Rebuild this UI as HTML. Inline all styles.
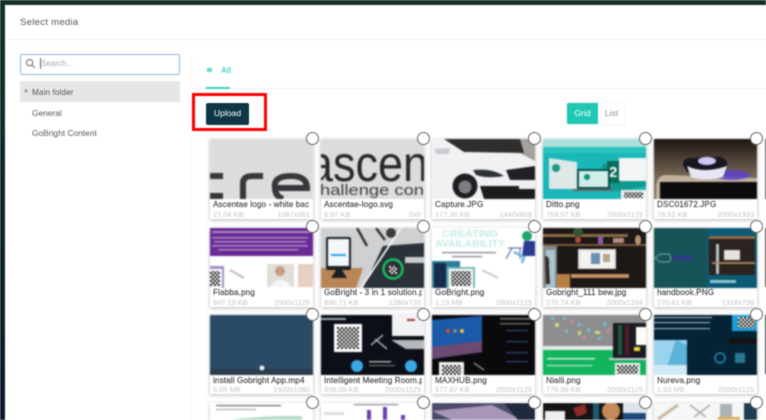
<!DOCTYPE html>
<html><head><meta charset="utf-8"><style>
html,body{margin:0;padding:0;width:766px;height:420px;overflow:hidden;background:#fff}
body{position:relative;font-family:"Liberation Sans",sans-serif;color:#4a4a52}
.a{position:absolute}
#wrap{position:absolute;left:0;top:0;width:766px;height:420px;overflow:hidden;filter:blur(.4px);background:#fff}
.card{position:absolute;width:103px;height:80px;background:#fff;box-shadow:0 1px 4px rgba(0,0,0,.28)}
.card svg{position:absolute;left:0;top:0;width:103px;height:60px;display:block;filter:blur(.45px)}
.r4{height:17px;overflow:hidden}
.card.r4 svg{height:17px}
.n{position:absolute;left:3px;top:60px;width:98px;height:12px;line-height:12px;font-size:8.2px;letter-spacing:.1px;white-space:nowrap;overflow:hidden;color:#46464c;-webkit-text-stroke:.15px #46464c}
.s,.d{position:absolute;top:71px;line-height:9px;font-size:7.4px;color:#c4c4c8}
.s{left:3px}.d{right:3px}
.r2 .n{top:59px}.r2 .s,.r2 .d{top:70px}
.r3 .n{top:60px}.r3 .s,.r3 .d{top:70px}
.c{position:absolute;width:11px;height:11px;border:1.3px solid #666;border-radius:50%;background:#fff}
</style></head><body><div id="wrap">
<div class="a" style="left:0;top:0;width:766px;height:5px;background:#15302a"></div>
<div class="a" style="left:0;top:0;width:5px;height:420px;background:linear-gradient(#15302a,#0b1a2c)"></div>
<div class="a" style="left:8px;top:39px;width:758px;height:1px;background:#f0f0f2"></div>
<div class="a" style="left:20px;top:17px;font-size:9.6px;letter-spacing:.25px;color:#55555f">Select media</div>
<div class="a" style="left:20px;top:54px;width:158px;height:19px;border:1px solid #8db8de;border-radius:2px"></div>
<svg class="a" style="left:25px;top:58px" width="11" height="11" viewBox="0 0 11 11" fill="none" stroke="#777" stroke-width="1.1"><circle cx="4.6" cy="4.6" r="3.2"/><path d="M7 7l3 3"/></svg>
<div class="a" style="left:40px;top:58px;width:1px;height:11px;background:#666"></div>
<div class="a" style="left:41px;top:59px;font-size:8px;color:#a8a8ad">Search...</div>
<div class="a" style="left:20px;top:81px;width:160px;height:21px;background:#e6e6e6"></div>
<div class="a" style="left:25px;top:89px;width:0;height:0;border-left:3px solid #888;border-top:2.5px solid transparent;border-bottom:2.5px solid transparent"></div>
<div class="a" style="left:32px;top:88px;font-size:8.2px;letter-spacing:.1px;color:#555">Main folder</div>
<div class="a" style="left:32px;top:109px;font-size:8.2px;letter-spacing:.1px;color:#555">General</div>
<div class="a" style="left:32px;top:129px;font-size:8.2px;letter-spacing:.1px;color:#555">GoBright Content</div>
<div class="a" style="left:191px;top:55px;width:1px;height:365px;background:#f6f6f7"></div>
<div class="a" style="left:192px;top:88px;width:574px;height:1px;background:#f0f0f2"></div>
<div class="a" style="left:206px;top:87px;width:24px;height:1.5px;background:#3fd0bd"></div>
<div class="a" style="left:207px;top:68px;width:5px;height:4px;background:#62d9c9"></div>
<div class="a" style="left:221px;top:66px;font-size:8px;font-weight:bold;color:#4ed4c2">All</div>
<div class="a" style="left:192px;top:93px;width:69px;height:32px;border:3px solid #ff0000"></div>
<div class="a" style="left:206px;top:103px;width:43px;height:22px;background:#0e3647;border-radius:2px;color:#fff;font-size:8.6px;line-height:21px;text-align:center">Upload</div>
<div class="a" style="left:566px;top:102px;width:60px;height:23px;border:1px solid #f2f2f4;border-radius:2px;box-sizing:border-box"></div>
<div class="a" style="left:567px;top:103px;width:31px;height:21px;background:#1fc8b4;border-radius:2px 0 0 2px;color:#fff;font-size:8.6px;line-height:21px;text-align:center">Grid</div>
<div class="a" style="left:598px;top:103px;width:27px;height:21px;color:#8a8a94;font-size:8.6px;line-height:21px;text-align:center">List</div>

<!-- Row 1 -->
<div class="card" style="left:210px;top:139px"><svg viewBox="0 0 103 60"><defs><pattern id="q" width="4" height="4" patternUnits="userSpaceOnUse"><rect width="4" height="4" fill="#fff"/><rect width="2" height="2" fill="#1a1a1a"/><rect x="2" y="2" width="2" height="2" fill="#1a1a1a"/></pattern></defs><rect width="103" height="60" fill="#dcdcdc"/><g fill="none" stroke="#35373a" stroke-width="6"><path d="M0 37H13M0 57H13"/><path d="M33 60V44Q33 37 43 37H53"/><path d="M97 49H65Q63 37 81 37Q97 37 97 49ZM65 49Q65 57 73 60"/></g></svg><div class="n">Ascentae logo - white bac</div><div class="s">27.04 KB</div><div class="d">1087x261</div></div>
<div class="card" style="left:321px;top:139px"><svg viewBox="0 0 103 60"><rect width="103" height="60" fill="#dcdcdc"/><text x="-13" y="42" font-family="Liberation Sans" font-size="50" textLength="120" lengthAdjust="spacingAndGlyphs" fill="#27292b">ascen</text><text x="-1" y="56" font-family="Liberation Sans" font-size="14.5" textLength="104" lengthAdjust="spacingAndGlyphs" fill="#3a3c3e">hallenge con</text></svg><div class="n">Ascentae-logo.svg</div><div class="s">6.97 KB</div><div class="d">0x0</div></div>
<div class="card" style="left:432px;top:139px"><svg viewBox="0 0 103 60"><rect width="103" height="60" fill="#a5a29e"/><path d="M0 0H14L34 13 0 14Z" fill="#f1f1f3"/><path d="M12 0L32 13 92 14 88 0Z" fill="#2f2e2d"/><path d="M0 13H30L88 14 103 22V60H0Z" fill="#f1f1f3"/><path d="M3 10L18 9 17 15 4 15Z" fill="#c8ccd0"/><path d="M41 31Q60 29 72 37 56 40 44 36Z" fill="#2f3238"/><path d="M74 31L103 27V41H78Z" fill="#202126"/><circle cx="33" cy="47" r="12.5" fill="#1e1e20"/><circle cx="33" cy="48" r="6.5" fill="#7c7e82"/><path d="M48 47H103V60H52Z" fill="#1c1c1f"/><rect x="87" y="44" width="16" height="6" fill="#eee"/></svg><div class="n">Capture.JPG</div><div class="s">177.36 KB</div><div class="d">1440x809</div></div>
<div class="card" style="left:543px;top:139px"><svg viewBox="0 0 103 60"><rect width="103" height="60" fill="#1ab7b9"/><rect width="103" height="8" fill="#a8e0dc"/><path d="M0 8H103V14H0Z" fill="#2cc4c0"/><path d="M6 19L34 23V50L6 50Z" fill="#dde8e7"/><circle cx="13" cy="29" r="4" fill="#1b9a80"/><path d="M59 25H103V47L80 52 60 52Z" fill="#109a8f"/><rect x="64" y="22" width="13" height="22" fill="#0b6a5a"/><text x="66" y="38" font-family="Liberation Sans" font-size="15" font-weight="bold" fill="#fff">2</text><rect x="76" y="19" width="27" height="23" fill="#f4f6f5"/><rect x="34" y="30" width="33" height="20" fill="#0b4f4d"/><rect x="36" y="32" width="29" height="16" fill="#cfeeea"/><circle cx="44" cy="38" r="3" fill="#12907a"/><rect x="30" y="50" width="40" height="2" fill="#666"/><rect x="78" y="51" width="25" height="9" fill="#f3f3f3"/><rect x="81" y="53" width="19" height="6" fill="url(#q)"/></svg><div class="n">Ditto.png</div><div class="s">759.07 KB</div><div class="d">2000x1125</div></div>
<div class="card" style="left:654px;top:139px"><svg viewBox="0 0 103 60"><defs><linearGradient id="g1" x1="0" x2="0" y1="0" y2="1"><stop offset="0" stop-color="#1d1512"/><stop offset=".65" stop-color="#7b6a58"/></linearGradient></defs><rect width="103" height="60" fill="url(#g1)"/><path d="M2 48Q3 36 12 36L103 39V44H8L6 60H2Z" fill="#c0b29c"/><rect x="6" y="43" width="97" height="17" fill="#0c0a0c"/><ellipse cx="78" cy="36" rx="18" ry="5" fill="#5a3ed0" opacity=".8"/><path d="M29 26Q29 19 37 19L66 18Q74 20 73 26L70 33H33Z" fill="#17171e"/><path d="M33 27Q50 35 73 27L69 38Q50 43 37 38Z" fill="#e8e6f4"/><ellipse cx="53" cy="22" rx="9" ry="4" fill="#cfc8fa"/></svg><div class="n">DSC01672.JPG</div><div class="s">78.52 KB</div><div class="d">2000x1333</div></div>
<!-- Row 2 -->
<div class="card r2" style="left:210px;top:228px;height:79px"><svg viewBox="0 0 103 60"><rect width="103" height="60" fill="#fff"/><rect width="103" height="28" fill="#6b2a96"/><g fill="#a98bc2"><rect x="2" y="3" width="99" height="2"/><rect x="2" y="9" width="96" height="1.5"/><rect x="4" y="13" width="92" height="1.5"/><rect x="2" y="17" width="96" height="1.5"/><rect x="8" y="21" width="80" height="1.5"/></g><rect x="0" y="38" width="14" height="22" fill="#a58ccb"/><rect x="0" y="41" width="12" height="19" fill="#fff"/><rect x="0" y="43" width="10" height="15" fill="url(#q)"/><path d="M20 42L34 50" stroke="#bbb" stroke-width="2"/><rect x="57" y="36" width="27" height="23" fill="#e2ddd6"/><circle cx="70" cy="43" r="5" fill="#c69e84"/><path d="M60 59Q70 44 82 59Z" fill="#f3f7f8"/><rect x="88" y="36" width="15" height="23" fill="#e6cfc3"/></svg><div class="n">Flabba.png</div><div class="s">607.19 KB</div><div class="d">2000x1125</div></div>
<div class="card r2" style="left:321px;top:228px;height:79px"><svg viewBox="0 0 103 60"><rect width="103" height="60" fill="#cfd0d1"/><path d="M0 40H42L35 60H0Z" fill="#b98556"/><path d="M103 15L62 18 42 60H103Z" fill="#2b3138"/><path d="M80 0L40 60" stroke="#f4f4f4" stroke-width="1.8"/><path d="M36 0L46 18" stroke="#333" stroke-width="2.5"/><path d="M55 0L64 12" stroke="#333" stroke-width="2.5"/><circle cx="70" cy="5" r="5" fill="#3c3b3b"/><rect x="5" y="9" width="25" height="33" rx="2" fill="#1c1f22"/><rect x="7" y="11" width="21" height="27" fill="#f2f7fb"/><rect x="10" y="26" width="15" height="2" fill="#2fa0e8"/><path d="M15 42H21L26 50H10Z" fill="#1c1f22"/><circle cx="72" cy="41" r="9.5" fill="none" stroke="#16c060" stroke-width="2.5"/><rect x="68" y="38" width="8" height="8" fill="url(#q)"/><rect x="84" y="29" width="19" height="6" fill="#c6ccd0"/></svg><div class="n">GoBright - 3 in 1 solution.pr</div><div class="s">890.71 KB</div><div class="d">1280x720</div></div>
<div class="card r2" style="left:432px;top:228px;height:79px"><svg viewBox="0 0 103 60"><rect width="103" height="60" fill="#fff"/><text x="10" y="9" font-family="Liberation Sans" font-weight="bold" font-size="10" textLength="56" lengthAdjust="spacingAndGlyphs" fill="#c4ebe5">CREATING</text><text x="3" y="19" font-family="Liberation Sans" font-weight="bold" font-size="10" textLength="70" lengthAdjust="spacingAndGlyphs" fill="#c4ebe5">AVAILABILITY</text><rect x="10" y="24" width="54" height="1.2" fill="#77808c"/><rect x="20" y="28" width="30" height="1.2" fill="#77808c"/><path d="M76 20H90M80 20L74 31M88 20V31" stroke="#4858a8" stroke-width="1" fill="none"/><circle cx="95" cy="8" r="5" fill="#1fa56e"/><path d="M92 13H103V28H90Z" fill="#2b3b92"/><path d="M82 24L92 29 90 35" stroke="#6fb4dc" stroke-width="2.5" fill="none"/><rect x="0" y="33" width="28" height="27" fill="#2a7d9c"/><rect x="2" y="35" width="12" height="25" fill="#1a2a4c"/><rect x="15" y="39" width="28" height="21" fill="#6fb7bb"/><rect x="17" y="41" width="24" height="19" fill="#fff"/><rect x="19" y="43" width="20" height="15" fill="url(#q)"/><path d="M50 42L66 50" stroke="#ccc" stroke-width="2"/></svg><div class="n">GoBright.png</div><div class="s">1.13 MB</div><div class="d">2000x1125</div></div>
<div class="card r2" style="left:543px;top:228px;height:79px"><svg viewBox="0 0 103 60"><rect width="103" height="60" fill="#1d1716"/><rect y="6" width="85" height="3" fill="#8b6a45"/><rect y="16" width="103" height="2" fill="#7a5b3c"/><rect x="0" y="18" width="14" height="42" fill="#7e8b8a"/><rect x="3" y="22" width="9" height="38" fill="#a9c5cd"/><path d="M2 28Q7 28 6 37L7 56H3Z" fill="#3a2a28"/><rect x="14" y="46" width="13" height="14" fill="#b57f46"/><rect x="28" y="46" width="58" height="4" fill="#c49460"/><rect x="35" y="21" width="38" height="20" fill="#ddd"/><rect x="37" y="23" width="34" height="17" fill="#f4f3ef"/><rect x="48" y="25" width="9" height="11" fill="#6d8fb0"/><rect x="60" y="26" width="7" height="8" fill="#b8a48a"/><circle cx="35" cy="4" r="5" fill="#36552f"/><circle cx="35" cy="12" r="3" fill="#b94a38"/><rect x="55" y="8" width="5" height="8" fill="#8a5ba8"/><rect x="70" y="10" width="11" height="5" fill="#b19080"/><ellipse cx="95" cy="12" rx="3" ry="5" fill="#b8946c"/></svg><div class="n">Gobright_111 bew.jpg</div><div class="s">270.74 KB</div><div class="d">2000x1334</div></div>
<div class="card r2" style="left:654px;top:228px;height:79px"><svg viewBox="0 0 103 60"><rect width="103" height="60" fill="#17545a"/><rect x="53" width="50" height="60" fill="#0d5a76"/><rect x="55" y="8" width="46" height="39" fill="#2b2320"/><rect x="62" y="16" width="3" height="30" fill="#b5c5c8"/><rect x="70" y="22" width="16" height="10" fill="#e6e3dd"/><rect x="55" y="8" width="46" height="3" fill="#8e6a46"/><rect x="58" y="34" width="43" height="2" fill="#a78056"/><rect x="19" y="28" width="20" height="4" rx="1" fill="#33388a"/><path d="M1 30L6 26H15L17 30 15 34H6Z" fill="none" stroke="#9fc5c2" stroke-width=".7"/><rect x="56" y="52" width="26" height="3" fill="#8cc5ce"/></svg><div class="n">handbook.PNG</div><div class="s">270.81 KB</div><div class="d">1316x739</div></div>
<!-- Row 3 -->
<div class="card r3" style="left:210px;top:315px;height:79px"><svg viewBox="0 0 103 60"><rect width="103" height="60" fill="#2b4a66"/><rect y="54" width="103" height="6" fill="#2b3c4d"/><circle cx="52" cy="53" r="2.5" fill="#e8eef2"/></svg><div class="n">install Gobright App.mp4</div><div class="s">6.05 MB</div><div class="d">1920x1080</div></div>
<div class="card r3" style="left:321px;top:315px;height:79px"><svg viewBox="0 0 103 60"><rect width="103" height="60" fill="#0c0f17"/><rect x="13" y="9" width="28" height="28" fill="#fff"/><rect x="16" y="12" width="22" height="22" fill="url(#q)"/><path d="M50 30L62 20M54 24L66 34" stroke="#aaa" stroke-width="1.5"/><path d="M71 0H103V21H71Z" fill="#f0f2f3"/><path d="M70 25H103V34H85Z" fill="#b5b8bc"/><rect x="86" y="4" width="8" height="2" fill="#b33"/><circle cx="36" cy="51" r="6" fill="#39a9e6"/><circle cx="90" cy="51" r="6" fill="#39a9e6"/><rect x="48" y="46" width="22" height="1.5" fill="#aaa"/><rect x="48" y="50" width="26" height="1" fill="#777"/><rect x="0" y="3" width="25" height="2" fill="#9aa"/></svg><div class="n">Intelligent Meeting Room.p</div><div class="s">936.05 KB</div><div class="d">2000x1125</div></div>
<div class="card r3" style="left:432px;top:315px;height:79px"><svg viewBox="0 0 103 60"><rect width="103" height="60" fill="#0a0a0d"/><path d="M0 5L50 1V37L0 44Z" fill="#1a5aa8"/><path d="M0 32L50 26V37L0 44Z" fill="#6c4a72"/><circle cx="16" cy="16" r="2" fill="#d44"/><circle cx="23" cy="16" r="2" fill="#888"/><circle cx="30" cy="16" r="2" fill="#e7c43b"/><rect x="68" y="3" width="33" height="1.5" fill="#777"/><rect x="68" y="8" width="30" height="1.5" fill="#666"/><rect x="74" y="15" width="22" height="1.2" fill="#347"/><rect x="74" y="26" width="22" height="1.2" fill="#347"/><rect x="74" y="37" width="22" height="1.2" fill="#347"/><rect x="74" y="46" width="22" height="1.2" fill="#347"/><rect x="7" y="47" width="25" height="13" fill="#f2f2f2"/><rect x="10" y="50" width="19" height="10" fill="url(#q)"/><path d="M42 48L52 55" stroke="#888" stroke-width="1.5"/></svg><div class="n">MAXHUB.png</div><div class="s">577.87 KB</div><div class="d">2000x1125</div></div>
<div class="card r3" style="left:543px;top:315px;height:79px"><svg viewBox="0 0 103 60"><rect width="103" height="60" fill="#8e8e8e"/><g fill="#c8dc7a"><rect x="12" y="8" width="4" height="4"/><rect x="35" y="16" width="3" height="4"/><rect x="52" y="16" width="5" height="3"/></g><g fill="#6bc2cc"><rect x="8" y="2" width="3" height="3"/><rect x="20" y="2" width="3" height="3"/><rect x="35" y="8" width="3" height="3"/><rect x="44" y="13" width="3" height="4"/><rect x="60" y="7" width="3" height="4"/><rect x="55" y="22" width="3" height="3"/><rect x="22" y="15" width="3" height="3"/></g><g fill="#d88aa0"><rect x="28" y="5" width="3" height="3"/><rect x="40" y="21" width="3" height="3"/><rect x="64" y="14" width="3" height="3"/></g><rect y="31" width="103" height="4" fill="#e8e8e8"/><rect y="35" width="103" height="25" fill="#12b45e"/><rect x="4" y="43" width="48" height="1.5" fill="#cdf0dc"/><rect x="4" y="50" width="45" height="1.2" fill="#bfe8d0"/><rect x="70" y="8" width="33" height="35" fill="#1a1a22"/><rect x="75" y="10" width="4" height="30" fill="#1b5a3a"/><rect x="82" y="10" width="4" height="30" fill="#5a1a2a"/><rect x="93" y="12" width="10" height="18" fill="#fbfbf8"/><rect x="91" y="32" width="6" height="4" fill="#e8d832"/><rect x="66" y="43" width="37" height="2" fill="#ccc"/><rect x="72" y="48" width="25" height="12" fill="#f4f4f4"/><rect x="74" y="50" width="21" height="9" fill="url(#q)"/></svg><div class="n">Nialli.png</div><div class="s">776.86 KB</div><div class="d">2000x1125</div></div>
<div class="card r3" style="left:654px;top:315px;height:79px"><svg viewBox="0 0 103 60"><rect width="103" height="60" fill="#052336"/><rect x="78" y="0" width="25" height="16" fill="#1aa0d8"/><rect x="84" y="2" width="17" height="11" fill="url(#q)"/><rect x="0" y="2" width="58" height="1.2" fill="#9ab"/><rect x="0" y="7" width="56" height="1.2" fill="#9ab"/><rect x="0" y="13" width="56" height="1.2" fill="#9ab"/><rect x="75" y="23" width="28" height="6" fill="#141414"/><path d="M0 25H33V60H0Z" fill="#9ad3ee"/><path d="M22 25L33 30V60H10Z" fill="#5cb2d8"/><path d="M0 50H33V60H0Z" fill="#cfeaf5"/><circle cx="66" cy="43" r="5" fill="none" stroke="#1a8ab0" stroke-width="1.5"/><rect x="81" y="38" width="10" height="10" fill="#2a7894"/></svg><div class="n">Nureva.png</div><div class="s">1.63 MB</div><div class="d">2000x1125</div></div>
<!-- Row 4 -->
<div class="card r4" style="left:210px;top:403px"><svg viewBox="0 0 103 17"><rect width="103" height="17" fill="#fff"/><rect x="6" y="2" width="65" height="1.2" fill="#666"/><rect x="6" y="6" width="40" height="1" fill="#999"/><path d="M20 17Q55 12 92 13V17Z" fill="#b6dcc8"/></svg></div>
<div class="card r4" style="left:321px;top:403px"><svg viewBox="0 0 103 17"><rect width="103" height="17" fill="#fff"/><rect x="33" y="1" width="44" height="1.2" fill="#888"/><rect x="3" y="9" width="20" height="3" fill="#ddd"/><rect x="46" y="7" width="4" height="10" fill="#6b3eb5"/><rect x="62" y="4" width="4" height="13" fill="#6b3eb5"/><rect x="80" y="12" width="4" height="5" fill="#6b3eb5"/></svg></div>
<div class="card r4" style="left:432px;top:403px"><svg viewBox="0 0 103 17"><rect width="103" height="17" fill="#4a4c6a"/><path d="M0 8L60 2 90 17H20Z" fill="#a896b8"/><path d="M72 0H103V17H86Z" fill="#1e2a3e"/></svg></div>
<div class="card r4" style="left:543px;top:403px"><svg viewBox="0 0 103 17"><rect width="103" height="17" fill="#141414"/><rect x="2" y="8" width="20" height="9" fill="#eee"/><path d="M30 5L42 1 44 10 34 14Z" fill="#8d2a2a"/><path d="M50 0H56V17H50Z" fill="#1c5a70"/><circle cx="68" cy="8" r="9" fill="#c48a5a"/><rect x="80" y="0" width="23" height="10" fill="#dfe3ea"/><rect x="80" y="10" width="23" height="7" fill="#1d4a7a"/></svg></div>
<div class="card r4" style="left:654px;top:403px"><svg viewBox="0 0 103 17"><rect width="103" height="17" fill="#f6f6f6"/><path d="M4 16L24 2" stroke="#c9b9a4" stroke-width="3"/><path d="M36 2L52 14M56 2L40 14" stroke="#aaa" stroke-width="1.5"/><rect x="66" y="1" width="12" height="14" fill="#aab2b8"/><rect x="64" y="14" width="22" height="3" fill="#d8b060"/><rect x="90" y="0" width="13" height="17" fill="#1d3d50"/></svg></div>
<div class="a" style="left:765px;top:139px;width:1px;height:60px;background:#555"></div>
<div class="a" style="left:765px;top:228px;width:1px;height:59px;background:#444"></div>
<div class="a" style="left:765px;top:315px;width:1px;height:59px;background:#234"></div>
<!-- circles -->
<div class="c" style="left:306px;top:132px"></div><div class="c" style="left:417px;top:132px"></div><div class="c" style="left:528px;top:132px"></div><div class="c" style="left:639px;top:132px"></div><div class="c" style="left:750px;top:132px"></div>
<div class="c" style="left:306px;top:220px"></div><div class="c" style="left:417px;top:220px"></div><div class="c" style="left:528px;top:220px"></div><div class="c" style="left:639px;top:220px"></div><div class="c" style="left:750px;top:220px"></div>
<div class="c" style="left:306px;top:308px"></div><div class="c" style="left:417px;top:308px"></div><div class="c" style="left:528px;top:308px"></div><div class="c" style="left:639px;top:308px"></div><div class="c" style="left:750px;top:308px"></div>
<div class="c" style="left:306px;top:396px"></div><div class="c" style="left:417px;top:396px"></div><div class="c" style="left:528px;top:396px"></div><div class="c" style="left:639px;top:396px"></div><div class="c" style="left:750px;top:396px"></div>
</div></body></html>
